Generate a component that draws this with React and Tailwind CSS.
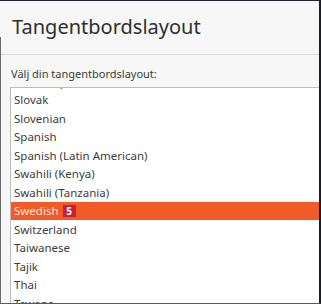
const ITEMS = [
  'Sinhala (phonetic)',
  'Slovak',
  'Slovenian',
  'Spanish',
  'Spanish (Latin American)',
  'Swahili (Kenya)',
  'Swahili (Tanzania)',
  'Swedish',
  'Switzerland',
  'Taiwanese',
  'Tajik',
  'Thai',
  'Tswana',
];

export default function App() {
  return (
    <div
      className="relative w-[321px] h-[304px] overflow-hidden bg-[#f6f7f6] border-t border-[#23232b] border-r-2 border-r-[#1c1c26] border-b border-b-[#5a5a5a] flex flex-col text-[#3c3c3c]"
      style={{ fontFamily: '"Noto Sans", "Open Sans", sans-serif' }}
    >
      {/* window edge on the left */}
      <div className="absolute left-0 top-[36px] bottom-0 w-px bg-[#6a6a6a]" />

      {/* Header */}
      <div className="h-[54px] shrink-0 border-b border-[#dcdcdc] pl-[12px] pt-[13px]">
        <h1 className="text-[20px] leading-[26px] text-[#2f2f2f]">Tangentbordslayout</h1>
      </div>

      {/* Label */}
      <p className="pl-[11px] pt-[11px] text-[11px] leading-[16px]">Välj din tangentbordslayout:</p>

      {/* List */}
      <div className="mt-[5px] ml-[10px] flex-1 overflow-hidden bg-white border-t border-l border-[#bdbdbd]">
        <div className="-mt-[16px]">
          {ITEMS.map(item => {
            const active = item === 'Swedish';
            return (
              <div
                key={item}
                className={`h-[18.5px] flex items-center gap-[4px] pl-[3px] text-[11.5px] whitespace-nowrap ${
                  active ? 'bg-[#f25b27] text-[#fde8de]' : ''
                }`}
              >
                <span>{item}</span>
                {active && (
                  <span className="h-[12px] w-[13px] flex items-center justify-center bg-[#c71f36] text-white text-[10px] font-bold leading-none">
                    5
                  </span>
                )}
              </div>
            );
          })}
        </div>
      </div>
    </div>
  );
}
